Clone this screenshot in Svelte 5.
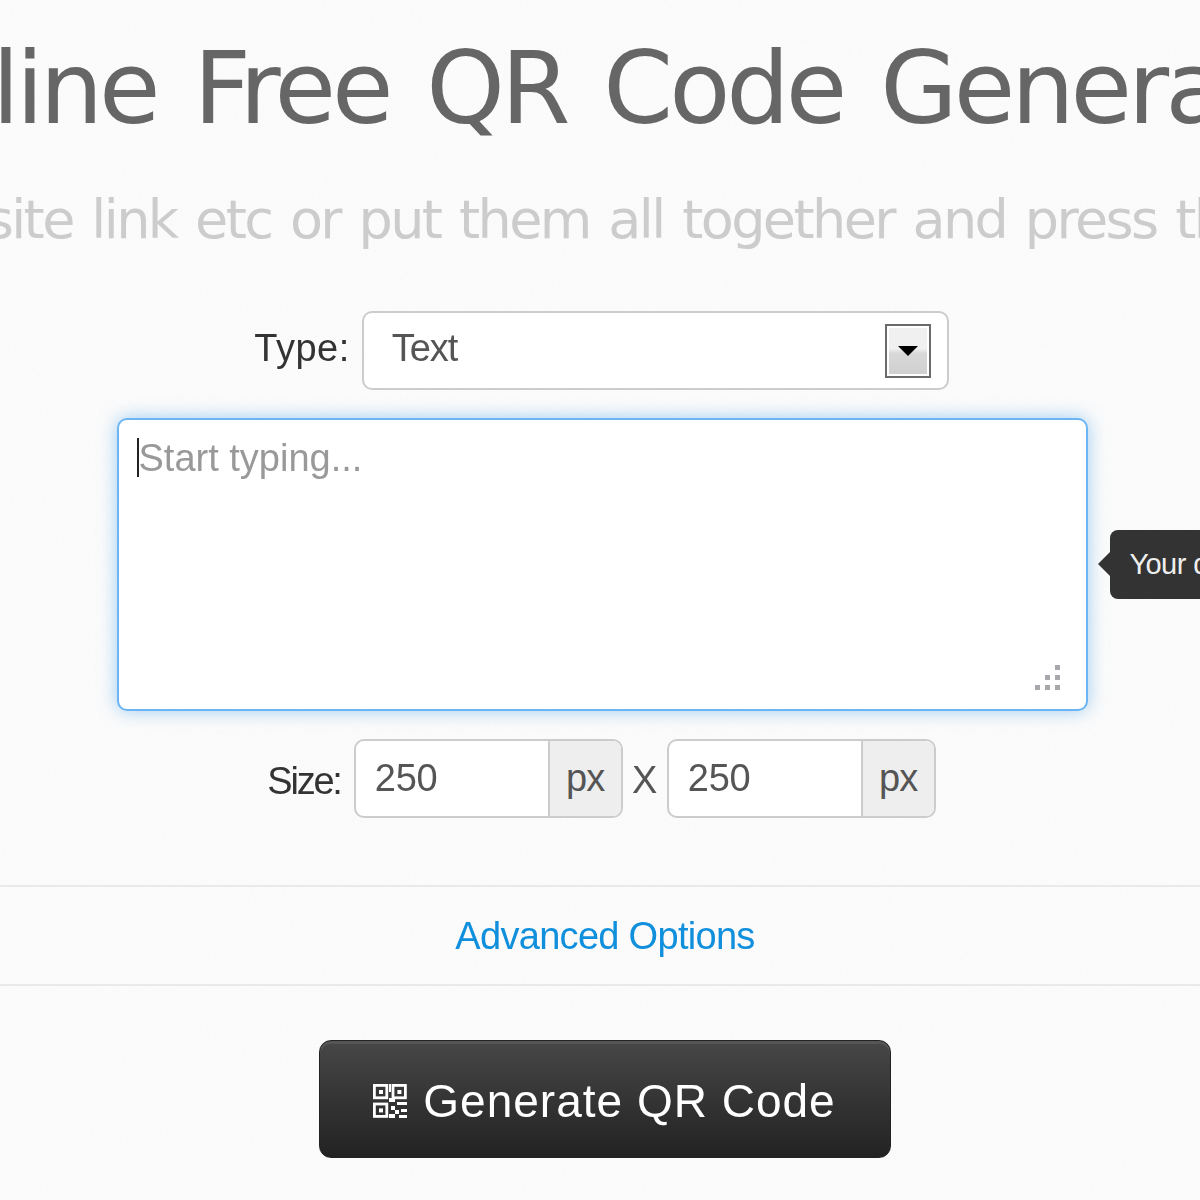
<script>
    let type = $state('Text');
    let width = $state('250');
    let height = $state('250');
</script>

<svg class="grain" aria-hidden="true">
    <filter id="noise">
        <feTurbulence type="fractalNoise" baseFrequency="0.35" numOctaves="2" seed="4" />
        <feColorMatrix values="0 0 0 0 0.5  0 0 0 0 0.5  0 0 0 0 0.5  0.5 0 0 0 -0.2" />
    </filter>
    <rect width="100%" height="100%" filter="url(#noise)" opacity="0.1" />
</svg>

<main class="page">
    <h1>Online Free QR Code Generator</h1>
    <p class="lead">Enter text, website link etc or put them all together and press the button to begin</p>

    <form class="form">
        <div class="row type-row">
            <label for="type">Type:</label>
            <div class="select">
                <select id="type" bind:value={type}>
                    <option>Text</option>
                    <option>URL</option>
                </select>
                <span class="arrow"><i></i></span>
            </div>
        </div>

        <div class="text-wrap">
            <textarea placeholder="Start typing..."></textarea>
            <span class="caret"></span>
            <svg class="grip" width="30" height="30" viewBox="0 0 30 30">
                <g fill="#a8a8ac">
                    <rect x="21" y="1" width="5" height="5" />
                    <rect x="11" y="11" width="5" height="5" />
                    <rect x="21" y="11" width="5" height="5" />
                    <rect x="1" y="21" width="5" height="5" />
                    <rect x="11" y="21" width="5" height="5" />
                    <rect x="21" y="21" width="5" height="5" />
                </g>
            </svg>
            <div class="tooltip">Your data is private</div>
        </div>

        <div class="row size-row">
            <label for="w">Size:</label>
            <div class="size">
                <input id="w" bind:value={width} />
                <span>px</span>
            </div>
            <b>X</b>
            <div class="size">
                <input id="h" bind:value={height} />
                <span>px</span>
            </div>
        </div>

        <div class="advanced"><a href="#advanced">Advanced Options</a></div>

        <button type="button" class="generate">
            <svg width="34" height="34" viewBox="0 0 17 17">
                <g fill="none" stroke="#fff" stroke-width="1.4">
                    <rect x="0.7" y="0.7" width="6.2" height="6.2" />
                    <rect x="10" y="0.7" width="6.2" height="6.2" />
                    <rect x="0.7" y="10" width="6.2" height="6.2" />
                </g>
                <g fill="#fff">
                    <rect x="3" y="3" width="2" height="2" />
                    <rect x="12.2" y="3" width="2" height="2" />
                    <rect x="3" y="12.2" width="2" height="2" />
                    <rect x="8" y="0" width="1" height="4" />
                    <rect x="8" y="7" width="3" height="2" />
                    <rect x="12" y="9" width="5" height="1.5" />
                    <rect x="9" y="11" width="2" height="2" />
                    <rect x="11" y="13" width="2" height="2" />
                    <rect x="14" y="12.5" width="3" height="1.5" />
                    <rect x="8" y="15" width="3" height="2" />
                    <rect x="13" y="15.5" width="4" height="1.5" />
                </g>
            </svg>
            Generate QR Code
        </button>
    </form>
</main>

<style>
    :global(body) {
        background: #fbfbfb;
        overflow: hidden;
    }

    .grain {
        position: fixed;
        inset: 0;
        width: 100%;
        height: 100%;
        pointer-events: none;
    }

    .page {
        position: relative;
        width: 1200px;
        height: 1200px;
        overflow: hidden;
        filter: blur(0.6px);
        font-family: "Liberation Sans", Arial, sans-serif;
        color: #333;
    }

    h1 {
        margin: 26px -400px 0;
        padding-left: 10px;
        font: 400 100px/125px "DejaVu Sans", Tahoma, sans-serif;
        letter-spacing: -4px;
        word-spacing: 9px;
        color: #666;
        text-align: center;
        white-space: nowrap;
    }

    .lead {
        margin: 33px -400px 0;
        padding-left: 2px;
        font: 400 54px/72px "DejaVu Sans", Tahoma, sans-serif;
        letter-spacing: -2.6px;
        word-spacing: 4px;
        color: #ccc;
        text-align: center;
        white-space: nowrap;
    }

    .form {
        margin-top: 55px;
        display: flex;
        flex-direction: column;
        align-items: center;
    }

    .row {
        display: flex;
        align-items: center;
        justify-content: center;
    }

    label {
        font-size: 38px;
        color: #333;
    }

    .type-row {
        margin-left: 3px;
        gap: 12px;
    }

    .type-row label {
        letter-spacing: 0.5px;
        padding-bottom: 4px;
    }

    .select {
        position: relative;
        width: 587px;
        height: 79px;
        box-sizing: border-box;
        background: #fff;
        border: 2px solid #ccc;
        border-radius: 10px;
    }

    select {
        appearance: none;
        width: 100%;
        height: 100%;
        padding: 0 0 6px 28px;
        border: 0;
        background: transparent;
        font: 38px "Liberation Sans", Arial, sans-serif;
        letter-spacing: -1px;
        color: #555;
        outline: none;
    }

    .arrow {
        position: absolute;
        top: 11px;
        right: 16px;
        width: 46px;
        height: 54px;
        box-sizing: border-box;
        display: flex;
        align-items: center;
        justify-content: center;
        border: 2px solid #6a6a6a;
        box-shadow: inset 0 0 0 2px #fff;
        background: linear-gradient(#f0f0f0 45%, #d8d8d8 55%, #cfcfcf);
    }

    .arrow i {
        width: 0;
        height: 0;
        border: 10px solid transparent;
        border-top: 10px solid #000;
        border-bottom: 0;
    }

    .text-wrap {
        position: relative;
        margin-top: 28px;
        margin-left: 4px;
        width: 971px;
        height: 293px;
    }

    textarea {
        display: block;
        width: 100%;
        height: 100%;
        box-sizing: border-box;
        padding: 16px 20px;
        background: #fff;
        border: 2px solid #6db5f2;
        border-radius: 10px;
        box-shadow: 0 0 18px rgba(82, 168, 236, 0.55);
        font: 38px/44px "Liberation Sans", Arial, sans-serif;
        resize: none;
        outline: none;
    }

    textarea::placeholder {
        color: #999;
        opacity: 1;
    }

    .caret {
        position: absolute;
        left: 20px;
        top: 20px;
        width: 2px;
        height: 39px;
        background: #222;
    }

    .grip {
        position: absolute;
        right: 24px;
        bottom: 17px;
    }

    .tooltip {
        position: absolute;
        left: 993px;
        top: 112px;
        width: 300px;
        height: 69px;
        box-sizing: border-box;
        padding: 0 20px;
        line-height: 68px;
        font-size: 29px;
        letter-spacing: -0.6px;
        white-space: nowrap;
        color: #eee;
        background: #333;
        border-radius: 8px;
    }

    .tooltip::before {
        content: "";
        position: absolute;
        left: -12px;
        top: 22px;
        border: 12px solid transparent;
        border-left: 0;
        border-right-color: #333;
    }

    .size-row {
        margin-top: 28px;
        margin-left: 3px;
    }

    .size-row label {
        margin-right: 13px;
        padding-top: 5px;
        letter-spacing: -2.2px;
    }

    .size-row b {
        width: 44px;
        padding-top: 3px;
        text-align: center;
        font-weight: 400;
        font-size: 38px;
        color: #555;
    }

    .size {
        width: 269px;
        height: 79px;
        box-sizing: border-box;
        display: flex;
        background: #fff;
        border: 2px solid #ccc;
        border-radius: 10px;
        overflow: hidden;
    }

    input {
        flex: 1;
        min-width: 0;
        padding: 0 0 0 19px;
        border: 0;
        outline: none;
        background: transparent;
        font: 38px "Liberation Sans", Arial, sans-serif;
        letter-spacing: -0.2px;
        color: #555;
    }

    .size span {
        width: 73px;
        box-sizing: border-box;
        display: flex;
        align-items: center;
        justify-content: center;
        background: #eee;
        border-left: 2px solid #ccc;
        font-size: 38px;
        letter-spacing: -0.8px;
        color: #555;
    }

    .advanced {
        margin-top: 67px;
        width: 100%;
        height: 101px;
        padding-top: 2px;
        box-sizing: border-box;
        display: flex;
        align-items: center;
        justify-content: center;
        border-top: 2px solid #eaeaea;
        border-bottom: 2px solid #eaeaea;
    }

    .advanced a {
        margin-left: 10px;
        font-size: 38px;
        letter-spacing: -0.7px;
        color: #0f8fdc;
        text-decoration: none;
    }

    .generate {
        margin-top: 54px;
        margin-left: 9px;
        width: 572px;
        height: 118px;
        padding: 4px 0 0;
        display: flex;
        align-items: center;
        justify-content: center;
        gap: 16px;
        background: linear-gradient(#474747, #222);
        border: 1px solid #222;
        border-radius: 12px;
        box-shadow: inset 0 3px 0 #555;
        font: 46px "Liberation Sans", Arial, sans-serif;
        letter-spacing: 1px;
        color: #fff;
    }
</style>
